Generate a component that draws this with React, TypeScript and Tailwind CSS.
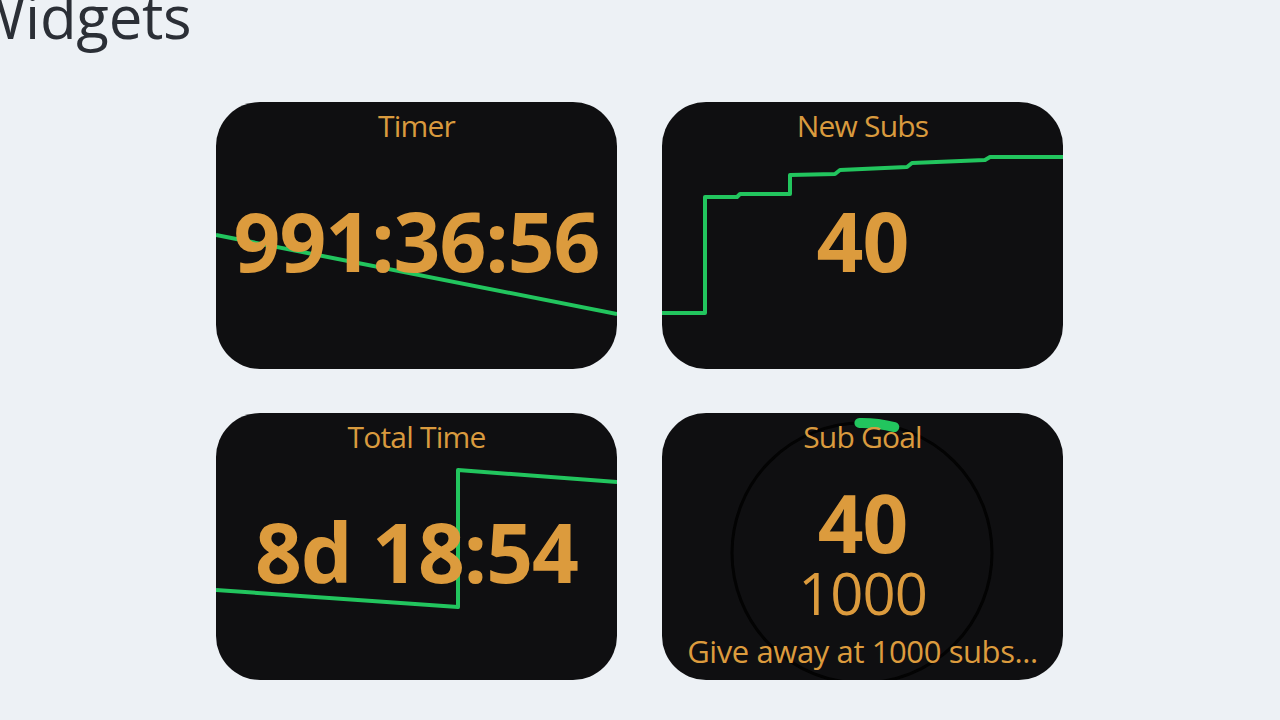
import React from "react";

const font = { fontFamily: '"Open Sans", "Noto Sans", sans-serif' };

function Card({ children }: { children: React.ReactNode }) {
  return (
    <div className="relative w-[401px] h-[267px] rounded-[44px] overflow-hidden bg-[#0f0f11]">
      {children}
    </div>
  );
}

function Title({ text }: { text: string }) {
  return (
    <div className="relative text-center text-[30px] font-medium leading-none pt-[9px] text-[#d99a3e] tracking-[-0.8px]">
      {text}
    </div>
  );
}

function BigValue({ text }: { text: string }) {
  return (
    <div className="relative flex-1 flex items-center justify-center pb-[30px]">
      <span className="text-[82px] font-bold leading-none text-[#dc9b3d] tracking-[-1px]">{text}</span>
    </div>
  );
}

export default function App() {
  const arcEnd = 0.04 * 2 * Math.PI;
  const cx = 200, cy = 140, r = 130;
  const sx = cx + r * Math.sin(-0.02);
  const sy = cy - r * Math.cos(-0.02);
  const ex = cx + r * Math.sin(arcEnd);
  const ey = cy - r * Math.cos(arcEnd);
  return (
    <div className="w-[1280px] h-[720px] overflow-hidden bg-[#edf1f5] flex flex-col" style={font}>
      <div className="h-[102px] flex flex-col">
        <div className="ml-[-30px] mt-[-20px] text-[60px] leading-[1.2] text-[#2b2f36] tracking-[-0.3px]">Widgets</div>
      </div>
      <div className="pl-[216px] grid grid-cols-[401px_401px] gap-x-[45px] gap-y-[44px]">
        <Card>
          <svg className="absolute inset-0" width="401" height="267">
            <polyline points="0,133 401,212" fill="none" stroke="#22c55e" strokeWidth="4" />
          </svg>
          <div className="relative h-full flex flex-col">
            <Title text="Timer" />
            <BigValue text="991:36:56" />
          </div>
        </Card>
        <Card>
          <svg className="absolute inset-0" width="401" height="267">
            <polyline
              points="0,211 43,211 43,95 75,95 78,92 128,92 128,73 173,72 178,68 245,65 250,61 323,58 328,55 401,55"
              fill="none"
              stroke="#22c55e"
              strokeWidth="4"
              strokeLinejoin="round"
            />
          </svg>
          <div className="relative h-full flex flex-col">
            <Title text="New Subs" />
            <BigValue text="40" />
          </div>
        </Card>
        <Card>
          <svg className="absolute inset-0" width="401" height="267">
            <polyline
              points="0,177 242,194 242,57 401,69"
              fill="none"
              stroke="#22c55e"
              strokeWidth="4"
              strokeLinejoin="round"
            />
          </svg>
          <div className="relative h-full flex flex-col">
            <Title text="Total Time" />
            <BigValue text="8d 18:54" />
          </div>
        </Card>
        <Card>
          <svg className="absolute inset-0" width="401" height="267">
            <circle cx={cx} cy={cy} r={r} fill="none" stroke="#030303" strokeWidth="3" />
            <path
              d={`M ${sx.toFixed(1)} ${sy.toFixed(1)} A ${r} ${r} 0 0 1 ${ex.toFixed(1)} ${ey.toFixed(1)}`}
              fill="none"
              stroke="#22c55e"
              strokeWidth="10"
              strokeLinecap="round"
            />
          </svg>
          <div className="relative h-full flex flex-col items-center">
            <Title text="Sub Goal" />
            <div className="mt-[30px] text-[80px] font-bold leading-none text-[#dc9b3d] tracking-[-1px]">40</div>
            <div className="mt-[2px] text-[58px] leading-none text-[#dc9b3d] tracking-[-1px]">1000</div>
            <div className="mt-[14px] text-[31px] font-medium leading-none text-[#dc9b3d] tracking-[-0.4px]">Give away at 1000 subs...</div>
          </div>
        </Card>
      </div>
    </div>
  );
}
